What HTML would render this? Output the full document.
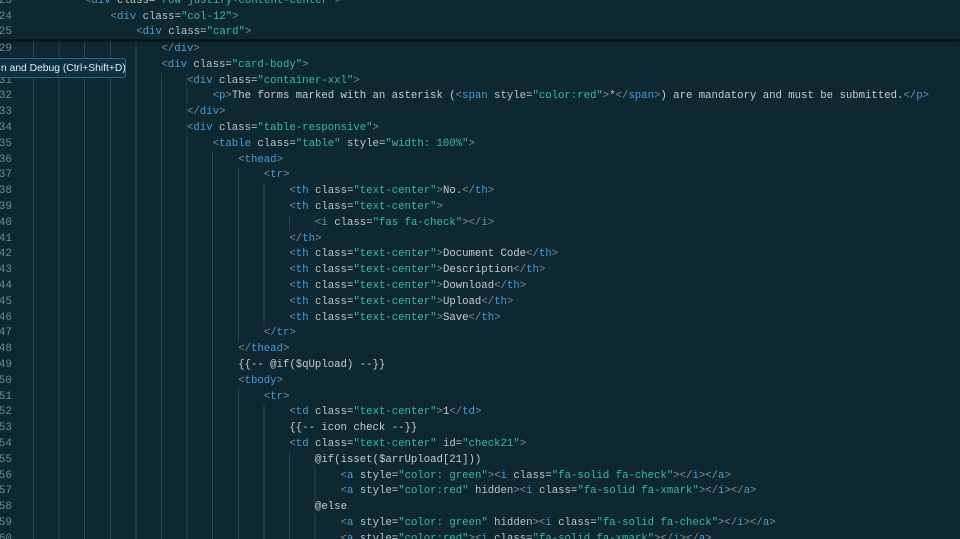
<!DOCTYPE html>
<html><head><meta charset="utf-8"><style>
html,body{margin:0;padding:0;background:#0e2832;width:960px;height:539px;overflow:hidden;}
body{position:relative;font-family:"Liberation Mono",monospace;font-size:10.67px;color:#c6ccd0;}
.l{position:absolute;left:0;height:16px;line-height:16px;width:960px;white-space:pre;margin-top:2px;}
.n{position:absolute;right:948px;color:#6f8891;text-align:right;font-size:11px;}
.c{position:absolute;}
.g{position:absolute;left:33px;top:0;height:16px;background:repeating-linear-gradient(to right,#2c4650 0 1px,transparent 1px 25.6px);}
.t{color:#4a9ad8}.b{color:#7f8c93}.a{color:#b9c3c9}.s{color:#3db8a0}
#hdr{position:absolute;left:0;top:0;width:960px;height:39px;background:#0e2832;border-bottom:1px solid #06161c;box-shadow:0 1px 3px #020c10;z-index:2;overflow:hidden;}
#tip{position:absolute;left:-2px;top:58px;width:128px;height:20px;background:#0d3142;border:1px solid #35647a;border-radius:3px;color:#e8eef2;font-family:"Liberation Sans",sans-serif;font-size:10.3px;line-height:19px;white-space:nowrap;z-index:3;box-sizing:border-box;padding-left:2px;overflow:hidden;}
</style></head><body>
<div id="hdr">
<div class="l" style="top:-9px"><span class="n">23</span><span class="c" style="left:85px"><span class="b">&lt;</span><span class="t">div</span> <span class="a">class</span>=<span class="s">"row justify-content-center"</span><span class="b">&gt;</span></span></div>
<div class="l" style="top:7px"><span class="n">24</span><span class="c" style="left:110.6px"><span class="b">&lt;</span><span class="t">div</span> <span class="a">class</span>=<span class="s">"col-12"</span><span class="b">&gt;</span></span></div>
<div class="l" style="top:22px"><span class="n">25</span><span class="c" style="left:136.2px"><span class="b">&lt;</span><span class="t">div</span> <span class="a">class</span>=<span class="s">"card"</span><span class="b">&gt;</span></span></div>
</div>
<div id="tip">n and Debug (Ctrl+Shift+D)</div>

<div class="l" style="top:39px"><span class="n">29</span><span class="g" style="width:128px"></span><span class="c" style="left:161.4px"><span class="b">&lt;/</span><span class="t">div</span><span class="b">&gt;</span></span></div>
<div class="l" style="top:55px"><span class="n">30</span><span class="g" style="width:128px"></span><span class="c" style="left:161.4px"><span class="b">&lt;</span><span class="t">div</span> <span class="a">class</span>=<span class="s">"card-body"</span><span class="b">&gt;</span></span></div>
<div class="l" style="top:71px"><span class="n">31</span><span class="g" style="width:154px"></span><span class="c" style="left:187px"><span class="b">&lt;</span><span class="t">div</span> <span class="a">class</span>=<span class="s">"container-xxl"</span><span class="b">&gt;</span></span></div>
<div class="l" style="top:86px"><span class="n">32</span><span class="g" style="width:179px"></span><span class="c" style="left:212.6px"><span class="b">&lt;</span><span class="t">p</span><span class="b">&gt;</span>The forms marked with an asterisk (<span class="b">&lt;</span><span class="t">span</span> <span class="a">style</span>=<span class="s">"color:red"</span><span class="b">&gt;</span>*<span class="b">&lt;/</span><span class="t">span</span><span class="b">&gt;</span>) are mandatory and must be submitted.<span class="b">&lt;/</span><span class="t">p</span><span class="b">&gt;</span></span></div>
<div class="l" style="top:102px"><span class="n">33</span><span class="g" style="width:154px"></span><span class="c" style="left:187px"><span class="b">&lt;/</span><span class="t">div</span><span class="b">&gt;</span></span></div>
<div class="l" style="top:118px"><span class="n">34</span><span class="g" style="width:154px"></span><span class="c" style="left:187px"><span class="b">&lt;</span><span class="t">div</span> <span class="a">class</span>=<span class="s">"table-responsive"</span><span class="b">&gt;</span></span></div>
<div class="l" style="top:134px"><span class="n">35</span><span class="g" style="width:179px"></span><span class="c" style="left:212.6px"><span class="b">&lt;</span><span class="t">table</span> <span class="a">class</span>=<span class="s">"table"</span> <span class="a">style</span>=<span class="s">"width: 100%"</span><span class="b">&gt;</span></span></div>
<div class="l" style="top:150px"><span class="n">36</span><span class="g" style="width:205px"></span><span class="c" style="left:238.2px"><span class="b">&lt;</span><span class="t">thead</span><span class="b">&gt;</span></span></div>
<div class="l" style="top:165px"><span class="n">37</span><span class="g" style="width:230px"></span><span class="c" style="left:263.8px"><span class="b">&lt;</span><span class="t">tr</span><span class="b">&gt;</span></span></div>
<div class="l" style="top:181px"><span class="n">38</span><span class="g" style="width:256px"></span><span class="c" style="left:289.4px"><span class="b">&lt;</span><span class="t">th</span> <span class="a">class</span>=<span class="s">"text-center"</span><span class="b">&gt;</span>No.<span class="b">&lt;/</span><span class="t">th</span><span class="b">&gt;</span></span></div>
<div class="l" style="top:197px"><span class="n">39</span><span class="g" style="width:256px"></span><span class="c" style="left:289.4px"><span class="b">&lt;</span><span class="t">th</span> <span class="a">class</span>=<span class="s">"text-center"</span><span class="b">&gt;</span></span></div>
<div class="l" style="top:213px"><span class="n">40</span><span class="g" style="width:282px"></span><span class="c" style="left:315px"><span class="b">&lt;</span><span class="t">i</span> <span class="a">class</span>=<span class="s">"fas fa-check"</span><span class="b">&gt;&lt;/</span><span class="t">i</span><span class="b">&gt;</span></span></div>
<div class="l" style="top:229px"><span class="n">41</span><span class="g" style="width:256px"></span><span class="c" style="left:289.4px"><span class="b">&lt;/</span><span class="t">th</span><span class="b">&gt;</span></span></div>
<div class="l" style="top:244px"><span class="n">42</span><span class="g" style="width:256px"></span><span class="c" style="left:289.4px"><span class="b">&lt;</span><span class="t">th</span> <span class="a">class</span>=<span class="s">"text-center"</span><span class="b">&gt;</span>Document Code<span class="b">&lt;/</span><span class="t">th</span><span class="b">&gt;</span></span></div>
<div class="l" style="top:260px"><span class="n">43</span><span class="g" style="width:256px"></span><span class="c" style="left:289.4px"><span class="b">&lt;</span><span class="t">th</span> <span class="a">class</span>=<span class="s">"text-center"</span><span class="b">&gt;</span>Description<span class="b">&lt;/</span><span class="t">th</span><span class="b">&gt;</span></span></div>
<div class="l" style="top:276px"><span class="n">44</span><span class="g" style="width:256px"></span><span class="c" style="left:289.4px"><span class="b">&lt;</span><span class="t">th</span> <span class="a">class</span>=<span class="s">"text-center"</span><span class="b">&gt;</span>Download<span class="b">&lt;/</span><span class="t">th</span><span class="b">&gt;</span></span></div>
<div class="l" style="top:292px"><span class="n">45</span><span class="g" style="width:256px"></span><span class="c" style="left:289.4px"><span class="b">&lt;</span><span class="t">th</span> <span class="a">class</span>=<span class="s">"text-center"</span><span class="b">&gt;</span>Upload<span class="b">&lt;/</span><span class="t">th</span><span class="b">&gt;</span></span></div>
<div class="l" style="top:308px"><span class="n">46</span><span class="g" style="width:256px"></span><span class="c" style="left:289.4px"><span class="b">&lt;</span><span class="t">th</span> <span class="a">class</span>=<span class="s">"text-center"</span><span class="b">&gt;</span>Save<span class="b">&lt;/</span><span class="t">th</span><span class="b">&gt;</span></span></div>
<div class="l" style="top:323px"><span class="n">47</span><span class="g" style="width:230px"></span><span class="c" style="left:263.8px"><span class="b">&lt;/</span><span class="t">tr</span><span class="b">&gt;</span></span></div>
<div class="l" style="top:339px"><span class="n">48</span><span class="g" style="width:205px"></span><span class="c" style="left:238.2px"><span class="b">&lt;/</span><span class="t">thead</span><span class="b">&gt;</span></span></div>
<div class="l" style="top:355px"><span class="n">49</span><span class="g" style="width:205px"></span><span class="c" style="left:238.2px">{{-- @if($qUpload) --}}</span></div>
<div class="l" style="top:371px"><span class="n">50</span><span class="g" style="width:205px"></span><span class="c" style="left:238.2px"><span class="b">&lt;</span><span class="t">tbody</span><span class="b">&gt;</span></span></div>
<div class="l" style="top:387px"><span class="n">51</span><span class="g" style="width:230px"></span><span class="c" style="left:263.8px"><span class="b">&lt;</span><span class="t">tr</span><span class="b">&gt;</span></span></div>
<div class="l" style="top:402px"><span class="n">52</span><span class="g" style="width:256px"></span><span class="c" style="left:289.4px"><span class="b">&lt;</span><span class="t">td</span> <span class="a">class</span>=<span class="s">"text-center"</span><span class="b">&gt;</span>1<span class="b">&lt;/</span><span class="t">td</span><span class="b">&gt;</span></span></div>
<div class="l" style="top:418px"><span class="n">53</span><span class="g" style="width:256px"></span><span class="c" style="left:289.4px">{{-- icon check --}}</span></div>
<div class="l" style="top:434px"><span class="n">54</span><span class="g" style="width:256px"></span><span class="c" style="left:289.4px"><span class="b">&lt;</span><span class="t">td</span> <span class="a">class</span>=<span class="s">"text-center"</span> <span class="a">id</span>=<span class="s">"check21"</span><span class="b">&gt;</span></span></div>
<div class="l" style="top:450px"><span class="n">55</span><span class="g" style="width:282px"></span><span class="c" style="left:315px">@if(isset($arrUpload[21]))</span></div>
<div class="l" style="top:466px"><span class="n">56</span><span class="g" style="width:307px"></span><span class="c" style="left:340.6px"><span class="b">&lt;</span><span class="t">a</span> <span class="a">style</span>=<span class="s">"color: green"</span><span class="b">&gt;&lt;</span><span class="t">i</span> <span class="a">class</span>=<span class="s">"fa-solid fa-check"</span><span class="b">&gt;&lt;/</span><span class="t">i</span><span class="b">&gt;&lt;/</span><span class="t">a</span><span class="b">&gt;</span></span></div>
<div class="l" style="top:481px"><span class="n">57</span><span class="g" style="width:307px"></span><span class="c" style="left:340.6px"><span class="b">&lt;</span><span class="t">a</span> <span class="a">style</span>=<span class="s">"color:red"</span> <span class="a">hidden</span><span class="b">&gt;&lt;</span><span class="t">i</span> <span class="a">class</span>=<span class="s">"fa-solid fa-xmark"</span><span class="b">&gt;&lt;/</span><span class="t">i</span><span class="b">&gt;&lt;/</span><span class="t">a</span><span class="b">&gt;</span></span></div>
<div class="l" style="top:497px"><span class="n">58</span><span class="g" style="width:282px"></span><span class="c" style="left:315px">@else</span></div>
<div class="l" style="top:513px"><span class="n">59</span><span class="g" style="width:307px"></span><span class="c" style="left:340.6px"><span class="b">&lt;</span><span class="t">a</span> <span class="a">style</span>=<span class="s">"color: green"</span> <span class="a">hidden</span><span class="b">&gt;&lt;</span><span class="t">i</span> <span class="a">class</span>=<span class="s">"fa-solid fa-check"</span><span class="b">&gt;&lt;/</span><span class="t">i</span><span class="b">&gt;&lt;/</span><span class="t">a</span><span class="b">&gt;</span></span></div>
<div class="l" style="top:529px"><span class="n">60</span><span class="g" style="width:307px"></span><span class="c" style="left:340.6px"><span class="b">&lt;</span><span class="t">a</span> <span class="a">style</span>=<span class="s">"color:red"</span><span class="b">&gt;&lt;</span><span class="t">i</span> <span class="a">class</span>=<span class="s">"fa-solid fa-xmark"</span><span class="b">&gt;&lt;/</span><span class="t">i</span><span class="b">&gt;&lt;/</span><span class="t">a</span><span class="b">&gt;</span></span></div>
</body></html>
